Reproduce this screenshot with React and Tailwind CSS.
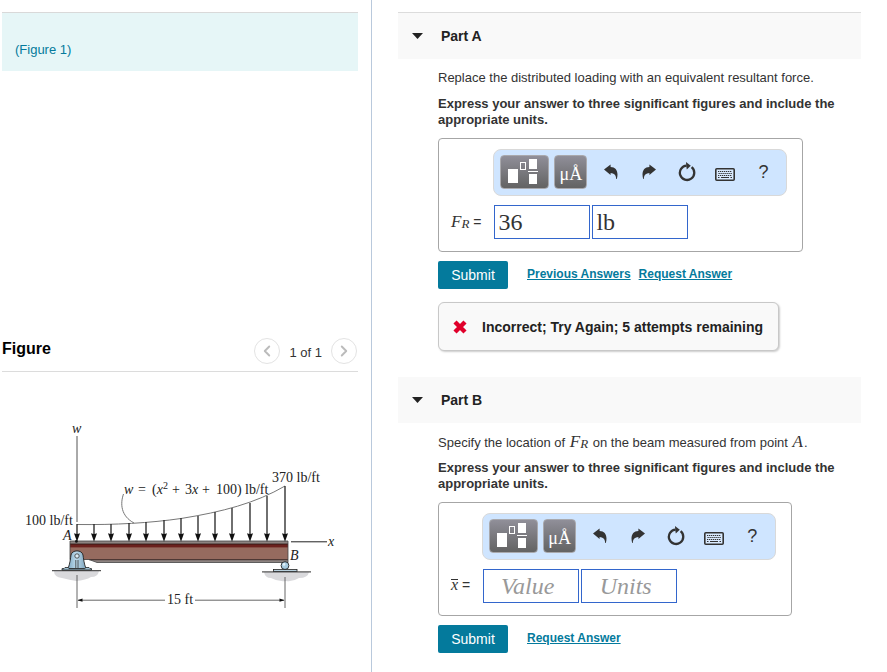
import React, { useState } from 'react';
import { ChevronLeft, ChevronRight } from 'lucide-react';

const UndoIcon = ({ className = '' }) => (
  <svg viewBox="0 0 14 15" className={`w-3.5 h-4 fill-[#333] ${className}`} aria-hidden="true">
    <path d="M0 5 L6.6 0 V2.4 C12.4 2.6 14.8 7.4 12.8 14.4 H12.2 C12 10.6 10 8.8 6.6 8.6 V10.4 Z" />
  </svg>
);

const ResetIcon = () => (
  <svg viewBox="0 0 18 20" className="w-[18px] h-5" aria-hidden="true">
    <path d="M13.6 5.2 A7.2 7.2 0 1 1 8.6 3.6" fill="none" stroke="#333" strokeWidth="2.3" />
    <path d="M8 0 L12.8 3.8 L8.8 7.4 L8.4 5 Z" fill="#333" />
  </svg>
);

const KeyboardIcon = () => (
  <svg viewBox="0 0 20 13" className="w-5 h-[13px]" aria-hidden="true">
    <rect x="0.8" y="0.8" width="18.4" height="11.4" rx="1" fill="#d9eaff" stroke="#333" strokeWidth="1.6" />
    <path d="M3 3.5 H17 M3.5 5.5 H17 M3 7.5 H17" stroke="#333" strokeWidth="1" strokeDasharray="1.3 0.7" />
    <path d="M3 9.5 H4.5 M6 9.5 H14 M15.5 9.5 H17" stroke="#333" strokeWidth="1" />
  </svg>
);

const TemplateIcon = () => (
  <svg viewBox="0 0 30 26" className="w-[30px] h-[26px]" aria-hidden="true">
    <rect x="0" y="10" width="10" height="14" fill="#fff" />
    <rect x="12.5" y="3.5" width="5" height="7" fill="none" stroke="#fff" strokeWidth="1" />
    <rect x="21" y="0" width="8" height="10" fill="#fff" />
    <rect x="20" y="12" width="10" height="1" fill="#fff" />
    <rect x="21" y="15" width="8" height="10" fill="#fff" />
  </svg>
);

const Toolbar = () => {
  const gray = 'flex items-center justify-center h-[34px] rounded border border-[#a9a9ad] bg-linear-to-b from-[#908f99] to-[#636363] text-white';
  const plain = 'flex items-center justify-center w-6 h-8 text-[#333]';

  return (
    <div className="flex items-start h-[47px] pt-[5px] pl-1.5 pr-[11px] rounded-lg border border-[#d9d9d9] bg-[#cfe5ff]">
      <button type="button" aria-label="Templates" className={`${gray} w-[49px] pr-1`}><TemplateIcon /></button>
      <button type="button" aria-label="Symbols" className={`${gray} w-[33px] ml-[5px] mr-3 pt-1 font-['Liberation_Serif',serif] text-[18px]`}>μÅ</button>
      <div className="flex gap-3.5 pt-px">
        <button type="button" aria-label="Undo" className={plain}><UndoIcon /></button>
        <button type="button" aria-label="Redo" className={plain}><UndoIcon className="-scale-x-100" /></button>
        <button type="button" aria-label="Reset" className={plain}><ResetIcon /></button>
        <button type="button" aria-label="Keyboard shortcuts" className={`${plain} pt-1`}><KeyboardIcon /></button>
        <button type="button" aria-label="Help" className={`${plain} text-[18px]`}>?</button>
      </div>
    </div>
  );
};

const AnswerBox = ({ id, label, defaultValue = '', defaultUnits = '' }) => {
  const [value, setValue] = useState(defaultValue);
  const [units, setUnits] = useState(defaultUnits);
  const field = "w-24 h-[34px] pl-[3px] pr-1 border border-[#3366cc] bg-white font-['Liberation_Serif',serif] text-[24px] text-[#333] outline-none placeholder:italic placeholder:text-center placeholder:text-[#999] placeholder-shown:pr-2.5";

  return (
    <div className="grid grid-cols-[auto_auto] w-fit gap-y-[9px] pt-2.5 pb-3 pl-3 pr-[15px] rounded border border-[#a6a6a6]">
      <div className="col-start-2"><Toolbar /></div>
      <label htmlFor={id} className="self-center pr-3 pb-0.5 text-[14px] text-[#333] whitespace-nowrap">{label} =</label>
      <div className="flex gap-0.5 pl-px">
        <input id={id} className={field} placeholder="Value" value={value} onChange={(e) => setValue(e.target.value)} />
        <input aria-label="Units" className={field} placeholder="Units" value={units} onChange={(e) => setUnits(e.target.value)} />
      </div>
    </div>
  );
};

const Force = () => (
  <span className="font-['Liberation_Serif',serif] italic text-[17px] leading-none">
    F<sub className="text-[13px] bottom-[-1px]">R</sub>
  </span>
);

const PartHeader = ({ title, className = '' }) => (
  <h2 className={`bg-[#f9f9f9] ${className}`}>
    <button type="button" className="flex items-center w-full h-[46px] pl-3.5 text-[14px] font-bold text-[#222]">
      <svg viewBox="0 0 11 6" className="w-[11px] h-1.5 mr-[18px]" aria-hidden="true">
        <path d="M0 0 H11 L5.5 6 Z" fill="#222" />
      </svg>
      {title}
    </button>
  </h2>
);

const SubmitRow = ({ links }) => (
  <div className="flex items-center mt-[9px]">
    <button type="button" className="w-[70px] h-7 mr-[19px] rounded-xs bg-[#047a9c] text-[14px] text-white">Submit</button>
    <div className="flex gap-2 pb-0.5">
      {links.map((link) => (
        <a key={link} href="#" className="text-[12px] font-bold text-[#047a9c] underline">{link}</a>
      ))}
    </div>
  </div>
);

// x position and top of every load arrow along the beam
const arrows = [
  [77, 524], [94, 524], [111, 524], [129, 523], [146, 522], [164, 520], [181, 518],
  [198, 516], [215, 512], [232, 508], [250, 503], [267, 496], [285, 486],
];

const BeamDiagram = () => (
  <svg viewBox="2 372 356 240" className="w-[356px] h-60 font-['Liberation_Serif',serif]" role="img" aria-label="Beam with distributed load">
    <defs>
      <linearGradient id="pin" x1="0" x2="1">
        <stop offset="0" stopColor="#7fa9c4" />
        <stop offset="0.45" stopColor="#bcd9ea" />
        <stop offset="1" stopColor="#7ba3bd" />
      </linearGradient>
    </defs>

    <g fill="none" stroke="#555" strokeWidth="1">
      <path d="M77 436 V522" />
      <path d="M77 524.5 C115 525 150 523 181 518.5 C222 512 256 503 285 486" stroke="#777" />
      <path d="M123.5 494 C120 504 121 516 134 523" stroke="#777" />
      <path d="M291 541.8 H327" stroke="#222" />
    </g>

    {/* supports */}
    <path d="M54 571 Q54 577 62 578 Q70 580 76 581 Q86 580 91 577 Q98 577 99 571 Z" fill="#d9d9dc" />
    <path d="M264 572 Q265 578 271 578 Q278 582 286 581 Q293 582 299 578 Q308 578 309 572 Z" fill="#d9d9dc" />
    <path d="M52 570.6 H101 M262 571.9 H311" stroke="#555" strokeWidth="1.2" />

    {/* beam */}
    <path d="M70 541 H288 V562.5 H97 L89 559.5 H70 Z" fill="#8d8380" />
    <rect x="70" y="544" width="218" height="15.5" fill="#966b5f" />
    <rect x="70" y="544" width="218" height="3.4" fill="#6b211d" />
    <path d="M70 544 H288 M89 559.7 H288" stroke="#2a1715" strokeWidth="0.8" />
    <path d="M70 541 V559.5 H89 L97 562.5 H288 V541 Z" fill="none" stroke="#444" strokeWidth="0.8" />

    <path d="M68 568.5 C70 564 70.5 558 71 555 C72 549.5 82 549.5 83 555 C83.5 558 84 564 86 568.5 Z" fill="url(#pin)" stroke="#222" strokeWidth="0.9" />
    <circle cx="77" cy="556" r="2.2" fill="#dcebf4" stroke="#333" strokeWidth="0.8" />
    <path d="M75.8 560 V568 M78 560 V568" stroke="#333" strokeWidth="0.8" />
    <path d="M62 570 V568.6 H64 L65 567.5 H68 L69 568.6 H84.5 L86 567.5 H89 L90 568.6 H91.5 V570 Z" fill="#9bbdd0" stroke="#222" strokeWidth="0.8" />

    <circle cx="285" cy="565.6" r="3.9" fill="#a7cbe0" stroke="#222" strokeWidth="0.9" />
    <circle cx="284" cy="564.4" r="1.3" fill="#e3f1f8" />
    <rect x="273.5" y="569.6" width="23.5" height="2" fill="#b7cfdc" stroke="#222" strokeWidth="0.8" />

    {/* load arrows */}
    {arrows.map(([x, top]) => (
      <g key={x}>
        <path d={`M${x} ${top} V535`} stroke="#222" strokeWidth="1.3" />
        <path d={`M${x - 3} 533.2 Q${x} 534.6 ${x + 3} 533.2 L${x} 541.8 Z`} fill="#111" />
      </g>
    ))}
    <circle cx="76.4" cy="541.4" r="1.4" fill="#111" />

    {/* span dimension */}
    <path d="M77 575 V608 M285 577 V608 M78 600.2 H165 M195 600.2 H284" stroke="#555" strokeWidth="0.9" />
    <path d="M77.5 600.2 L82.5 598.6 V601.8 Z M284.5 600.2 L279.5 598.6 V601.8 Z" fill="#111" />

    <g fill="#222" fontSize="14">
      <text x="72" y="433" fontStyle="italic">w</text>
      <text x="25" y="525">100 lb/ft</text>
      <text x="63" y="540" fontStyle="italic">A</text>
      <text y="494">
        <tspan x="124" fontStyle="italic">w</tspan>
        <tspan x="138">=</tspan>
        <tspan x="152">(</tspan>
        <tspan fontStyle="italic">x</tspan>
        <tspan fontSize="10" dy="-5">2</tspan>
        <tspan x="172" dy="5">+</tspan>
        <tspan x="185">3</tspan>
        <tspan fontStyle="italic">x</tspan>
        <tspan x="202">+</tspan>
        <tspan x="216">100)</tspan>
        <tspan x="245">lb/ft</tspan>
      </text>
      <text x="272" y="482">370 lb/ft</text>
      <text x="290" y="560" fontStyle="italic">B</text>
      <text x="328" y="546" fontStyle="italic">x</text>
      <text x="167" y="604">15 ft</text>
    </g>
  </svg>
);

const App = () => {
  const round = 'flex items-center justify-center size-[26px] rounded-full border border-[#e3e3e3] text-[#bbb]';

  return (
    <div className="flex min-h-screen bg-white font-['Liberation_Sans',Arial,sans-serif] text-[13px] leading-4 text-[#333]">
      {/* Figure panel */}
      <aside className="w-[372px] shrink-0 pt-3 pl-0.5 pr-[13px] border-r border-[#b9c9dc]">
        <div className="pt-[29px] pb-[13px] px-[13px] border-t border-[#d9d9d9] bg-[#e6f6f7]">
          <a href="#" className="text-[#047a9c]">(Figure 1)</a>
        </div>

        <div className="flex items-center justify-between mt-[267px] pb-[7px] pr-px border-b border-[#dcdcdc]">
          <h2 className="pb-1 text-[16px] font-bold text-black">Figure</h2>
          <div className="flex items-center">
            <button type="button" aria-label="Previous figure" className={round}><ChevronLeft size={18} strokeWidth={2.5} /></button>
            <span className="mx-[9px] pt-1">1 of 1</span>
            <button type="button" aria-label="Next figure" className={round}><ChevronRight size={18} strokeWidth={2.5} /></button>
          </div>
        </div>
        <BeamDiagram />
      </aside>

      {/* Questions */}
      <main className="flex-1 min-w-0 pt-3 px-[26px]">
        <section>
          <PartHeader title="Part A" className="border-t border-[#dcdcdc]" />
          <div className="pl-10 pt-[11px]">
            <p>Replace the distributed loading with an equivalent resultant force.</p>
            <p className="mt-2.5 mb-2.5 font-bold">Express your answer to three significant figures and include the appropriate units.</p>
            <AnswerBox id="force" label={<Force />} defaultValue="36" defaultUnits="lb" />
            <SubmitRow links={['Previous Answers', 'Request Answer']} />
            <div className="flex items-center w-fit h-[49px] mt-[13px] pl-3.5 pr-[15px] rounded-md border border-[#c8c8c8] bg-[#f9f9f9] shadow-[1px_1px_2px_#ccc] text-[14px] font-bold text-[#222]">
              <svg viewBox="0 0 14 14" className="size-3.5 mr-[15px]" aria-hidden="true">
                <path d="M2 2 L12 12 M12 2 L2 12" stroke="#e0002b" strokeWidth="4.4" />
              </svg>
              Incorrect; Try Again; 5 attempts remaining
            </div>
          </div>
        </section>

        <section className="mt-[26px]">
          <PartHeader title="Part B" />
          <div className="pl-10 pt-2.5">
            <p>
              Specify the location of <span className="mx-px"><Force /></span> on the beam measured from point{' '}
              <span className="mx-px font-['Liberation_Serif',serif] italic text-[17px] leading-none">A</span>.
            </p>
            <p className="mt-[9px] mb-2.5 font-bold">Express your answer to three significant figures and include the appropriate units.</p>
            <AnswerBox
              id="location"
              label={<span className="inline-block border-t border-[#333] font-['Liberation_Serif',serif] italic text-[16px] leading-[10px]">x</span>}
            />
            <SubmitRow links={['Request Answer']} />
          </div>
        </section>
      </main>
    </div>
  );
};

export default App;
